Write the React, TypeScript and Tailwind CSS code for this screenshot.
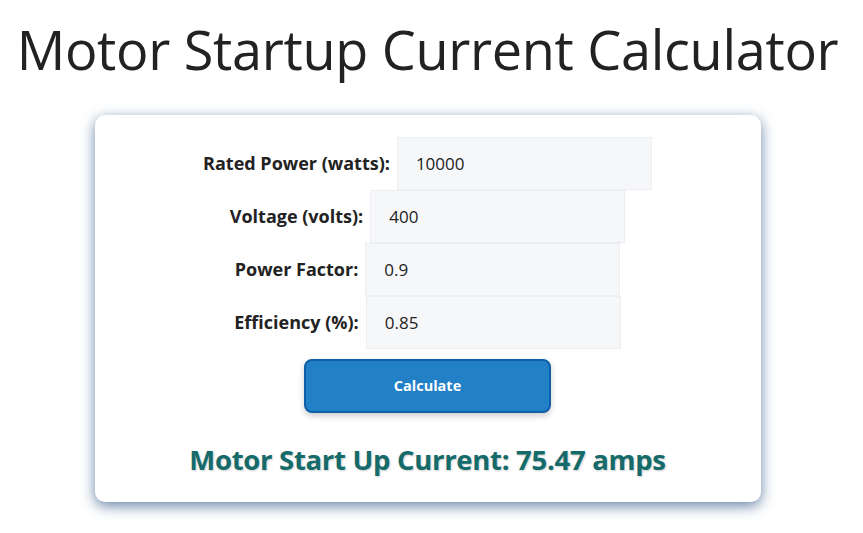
const fields = [
  { label: 'Rated Power (watts):', value: '10000' },
  { label: 'Voltage (volts):', value: '400' },
  { label: 'Power Factor:', value: '0.9' },
  { label: 'Efficiency (%):', value: '0.85' },
];

export default function App() {
  return (
    <div className="min-h-[533px] bg-white pr-[8px] font-['Open_Sans',_'Noto_Sans',_sans-serif] text-[#222]">
      <h1 className="pt-[12px] text-center text-[54px] font-normal leading-[74px] tracking-[-0.3px] text-[#222]">
        Motor Startup Current Calculator
      </h1>
      <div className="mx-auto mt-[29px] w-[666px] rounded-[10px] bg-white px-5 pt-[22px] pb-[23px] shadow-[0_4px_14px_rgba(40,80,130,0.7)]">
        {fields.map((f) => (
          <div key={f.label} className="flex items-center justify-center gap-[7px]">
            <label className="text-[18px] font-bold text-[#222]">{f.label}</label>
            <input
              readOnly
              value={f.value}
              className="h-[53px] w-[255px] border border-[#eceef1] bg-[#f6f7f9] px-[18px] text-[17px] text-[#222] outline-none"
            />
          </div>
        ))}
        <div className="mt-[10px] flex justify-center">
          <button className="h-[54px] w-[247px] rounded-[8px] border-2 border-[#0f5ea8] bg-[#2180c6] text-[14.5px] font-bold text-white shadow-[0_3px_6px_rgba(0,0,0,0.2)]">
            Calculate
          </button>
        </div>
        <p className="mt-[28px] text-center text-[27.5px] font-bold leading-[38px] tracking-[-0.3px] text-[#156a6a] [text-shadow:1px_1px_2px_rgba(0,0,0,0.2)]">
          Motor Start Up Current: 75.47 amps
        </p>
      </div>
    </div>
  );
}
